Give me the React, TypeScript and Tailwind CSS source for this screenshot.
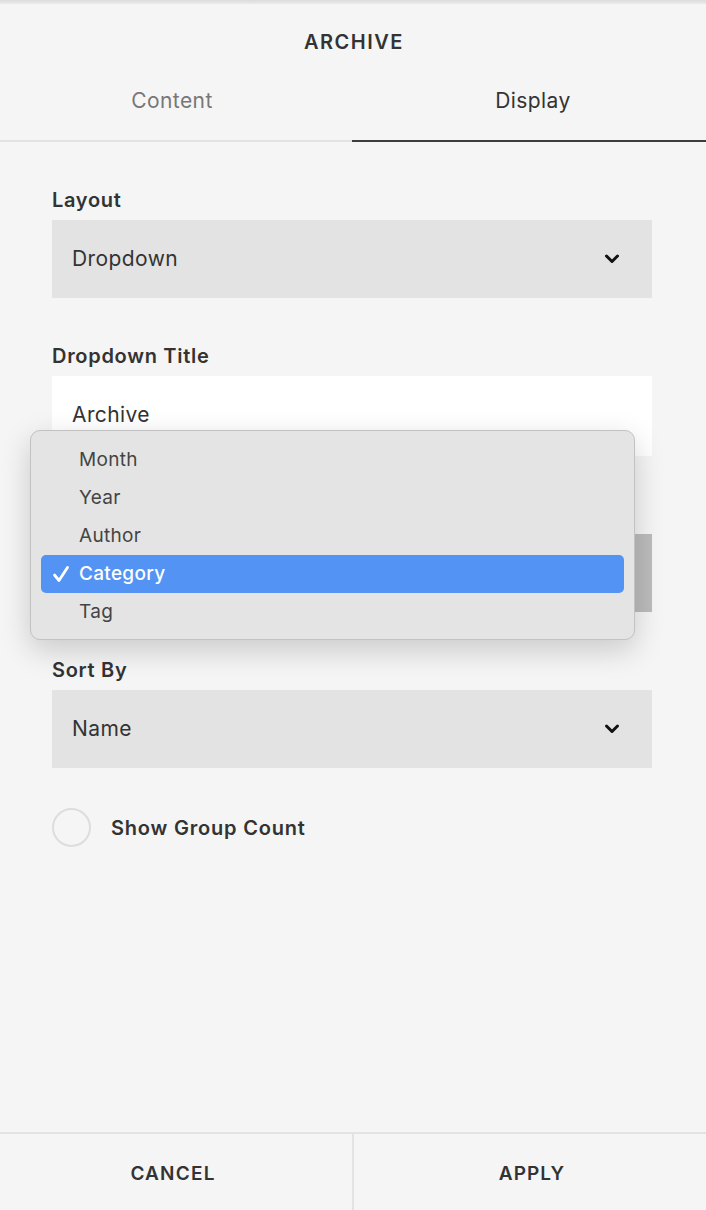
import React from "react";

const font = { fontFamily: "Inter, 'Noto Sans', sans-serif" };

function Chevron() {
  return (
    <svg width="16" height="12" viewBox="0 0 16 12" className="block">
      <polyline points="2.5,3 8,8.5 13.5,3" fill="none" stroke="#111" strokeWidth="3" strokeLinecap="round" strokeLinejoin="round" />
    </svg>
  );
}

function Select({ value, dark }: { value: string; dark?: boolean }) {
  return (
    <div className={`flex h-[78px] items-center justify-between pl-5 pr-[32px] ${dark ? "bg-[#bcbcbc]" : "bg-[#e3e3e3]"}`}>
      <span className="text-[21px] tracking-[0.4px] text-[#333]">{value}</span>
      <Chevron />
    </div>
  );
}

function Label({ children }: { children: React.ReactNode }) {
  return <div className="mb-[8px] text-[20px] font-semibold leading-[23px] tracking-[0.7px] text-[#333]">{children}</div>;
}

export default function App() {
  const items = ["Month", "Year", "Author", "Category", "Tag"];
  return (
    <div style={font} className="relative flex h-[1210px] w-[706px] flex-col overflow-hidden bg-[#f5f5f5]">
      <div className="h-[4px] bg-gradient-to-b from-[#dcdcdc] to-[#ebebeb]" />
      <div className="flex h-[74px] items-center justify-center pl-[2px] pt-[2px] text-[20px] font-semibold tracking-[1.5px] text-[#333]">ARCHIVE</div>
      <div className="flex">
        <div className="flex h-[64px] flex-1 items-center justify-center border-b-2 border-[#e2e2e2] pb-[16px] pr-[8px] text-[21px] tracking-[0.4px] text-[#777]">Content</div>
        <div className="flex h-[64px] w-[354px] items-center justify-center border-b-2 border-[#3c3c3c] pb-[16px] pl-[8px] text-[21px] tracking-[0.4px] text-[#333]">Display</div>
      </div>
      <div className="flex flex-col pl-[52px] pr-[54px] pt-[47px]">
        <Label>Layout</Label>
        <Select value="Dropdown" />
        <div className="h-[47px]" />
        <Label>Dropdown Title</Label>
        <div className="flex h-[80px] items-center bg-white pl-5 pb-[2px] text-[21px] tracking-[0.4px] text-[#333]">Archive</div>
        <div className="h-[47px]" />
        <Label>Group By</Label>
        <Select value="Category" dark />
        <div className="h-[47px]" />
        <Label>Sort By</Label>
        <Select value="Name" />
        <div className="mt-[40px] flex items-center gap-[20px]">
          <div className="h-[39px] w-[39px] rounded-full border-2 border-[#dddddd] bg-[#f5f5f5]" />
          <span className="text-[20px] font-semibold tracking-[0.8px] text-[#333]">Show Group Count</span>
        </div>
      </div>
      <div className="mt-auto flex h-[78px] border-t-2 border-[#e3e3e3]">
        <div className="flex flex-1 items-center justify-center pr-[6px] pt-[4px] text-[19px] font-semibold tracking-[1.2px] text-[#333]">CANCEL</div>
        <div className="w-[2px] bg-[#e3e3e3]" />
        <div className="flex w-[352px] items-center justify-center pl-[4px] pt-[4px] text-[19px] font-semibold tracking-[1px] text-[#333]">APPLY</div>
      </div>

      <div className="absolute left-[30px] top-[430px] flex h-[210px] w-[605px] flex-col rounded-[10px] border border-[#c2c2c2] bg-[#e4e4e4] px-[10px] pt-[10px] shadow-[0_10px_30px_rgba(0,0,0,0.18)]">
        {items.map((it) => {
          const sel = it === "Category";
          return (
            <div key={it} className={`flex h-[38px] items-center rounded-[5px] ${sel ? "bg-[#5393f3] text-white" : "text-[#444]"}`}>
              <div className="flex w-[38px] items-center justify-center pl-[2px]">
                {sel && (
                  <svg width="18" height="18" viewBox="0 0 18 18">
                    <path d="M2.5 10 L7 15.5 L15.5 2.5" fill="none" stroke="white" strokeWidth="2.8" strokeLinecap="round" strokeLinejoin="round" />
                  </svg>
                )}
              </div>
              <span className={`text-[19px] tracking-[0.3px] ${sel ? "font-medium" : ""}`}>{it}</span>
            </div>
          );
        })}
      </div>
    </div>
  );
}
